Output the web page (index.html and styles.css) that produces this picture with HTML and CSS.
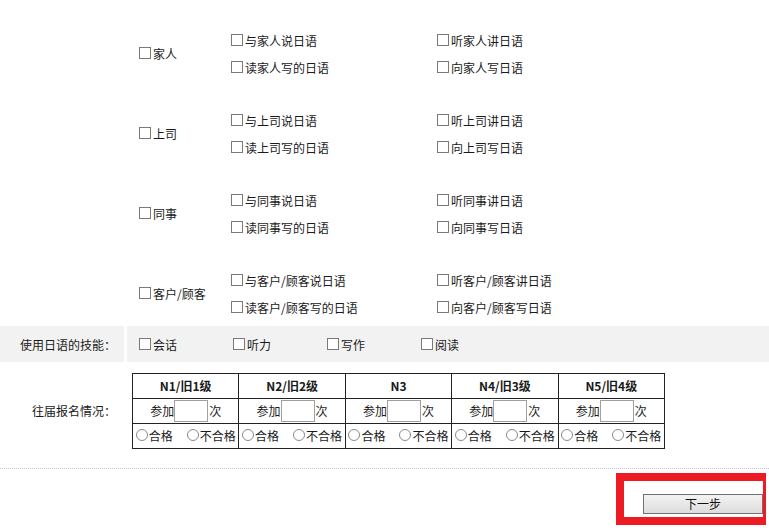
FILE: index.html
```html
<!DOCTYPE html>
<html lang="zh-CN">
<head>
<meta charset="utf-8">
<title>日语使用情况</title>
<link rel="stylesheet" href="styles.css">
</head>
<body>
<div class="form">
  <div class="scenes">
    <div class="row scene">
      <div class="label"></div>
      <div class="field scene-field">
        <div class="person"><span class="chk"><span class="box"></span>家人</span></div>
        <div class="subs">
          <span class="chk"><span class="box"></span>与家人说日语</span>
          <span class="chk"><span class="box"></span>听家人讲日语</span>
          <span class="chk"><span class="box"></span>读家人写的日语</span>
          <span class="chk"><span class="box"></span>向家人写日语</span>
        </div>
      </div>
    </div>
    <div class="row scene">
      <div class="label"></div>
      <div class="field scene-field">
        <div class="person"><span class="chk"><span class="box"></span>上司</span></div>
        <div class="subs">
          <span class="chk"><span class="box"></span>与上司说日语</span>
          <span class="chk"><span class="box"></span>听上司讲日语</span>
          <span class="chk"><span class="box"></span>读上司写的日语</span>
          <span class="chk"><span class="box"></span>向上司写日语</span>
        </div>
      </div>
    </div>
    <div class="row scene">
      <div class="label"></div>
      <div class="field scene-field">
        <div class="person"><span class="chk"><span class="box"></span>同事</span></div>
        <div class="subs">
          <span class="chk"><span class="box"></span>与同事说日语</span>
          <span class="chk"><span class="box"></span>听同事讲日语</span>
          <span class="chk"><span class="box"></span>读同事写的日语</span>
          <span class="chk"><span class="box"></span>向同事写日语</span>
        </div>
      </div>
    </div>
    <div class="row scene">
      <div class="label"></div>
      <div class="field scene-field">
        <div class="person"><span class="chk"><span class="box"></span>客户/顾客</span></div>
        <div class="subs">
          <span class="chk"><span class="box"></span>与客户/顾客说日语</span>
          <span class="chk"><span class="box"></span>听客户/顾客讲日语</span>
          <span class="chk"><span class="box"></span>读客户/顾客写的日语</span>
          <span class="chk"><span class="box"></span>向客户/顾客写日语</span>
        </div>
      </div>
    </div>
  </div>

  <div class="row skills">
    <div class="label gray">使用日语的技能：</div>
    <div class="field gray skills-field">
      <span class="chk skill"><span class="box"></span>会话</span>
      <span class="chk skill"><span class="box"></span>听力</span>
      <span class="chk skill"><span class="box"></span>写作</span>
      <span class="chk skill"><span class="box"></span>阅读</span>
    </div>
  </div>

  <div class="row exam">
    <div class="label">往届报名情况：</div>
    <div class="field exam-field">
      <table class="exam-table">
        <tr>
          <th>N1/旧1级</th><th>N2/旧2级</th><th>N3</th><th>N4/旧3级</th><th>N5/旧4级</th>
        </tr>
        <tr>
          <td><span class="times">参加<span class="input"></span>次</span></td>
          <td><span class="times">参加<span class="input"></span>次</span></td>
          <td><span class="times">参加<span class="input"></span>次</span></td>
          <td><span class="times">参加<span class="input"></span>次</span></td>
          <td><span class="times">参加<span class="input"></span>次</span></td>
        </tr>
        <tr>
          <td><span class="radios"><span class="rad"><span class="circle"></span>合格</span><span class="rad"><span class="circle"></span>不合格</span></span></td>
          <td><span class="radios"><span class="rad"><span class="circle"></span>合格</span><span class="rad"><span class="circle"></span>不合格</span></span></td>
          <td><span class="radios"><span class="rad"><span class="circle"></span>合格</span><span class="rad"><span class="circle"></span>不合格</span></span></td>
          <td><span class="radios"><span class="rad"><span class="circle"></span>合格</span><span class="rad"><span class="circle"></span>不合格</span></span></td>
          <td><span class="radios"><span class="rad"><span class="circle"></span>合格</span><span class="rad"><span class="circle"></span>不合格</span></span></td>
        </tr>
      </table>
    </div>
  </div>

  <div class="divider"></div>

  <div class="footer">
    <div class="highlight">
      <button class="next" type="button">下一步</button>
    </div>
  </div>
</div>
</body>
</html>
```

FILE: styles.css
```css
* { box-sizing: border-box; }

html, body {
  margin: 0;
  padding: 0;
  background: #fff;
}

body {
  font-family: "Noto Sans CJK SC", "Microsoft YaHei", sans-serif;
  font-size: 12px;
  color: #1a1a1a;
  line-height: 16px;
}

.form {
  width: 769px;
}

.scenes {
  padding-top: 27px;
  display: flex;
  flex-direction: column;
  gap: 26px;
}

.row {
  display: flex;
  gap: 3px;
}

.label {
  width: 124px;
  flex: none;
  text-align: right;
  padding-right: 8px;
  display: flex;
  align-items: center;
  justify-content: flex-end;
}

.label-text {
  letter-spacing: -0.5px;
}

.field {
  flex: 1;
  display: flex;
  align-items: center;
}

.gray { background: #f2f2f2; }

/* checkbox */
.chk {
  display: inline-flex;
  align-items: center;
  white-space: nowrap;
}

.box {
  width: 12px;
  height: 12px;
  border: 1px solid #7a7a7a;
  background: #fff;
  margin-right: 2px;
  margin-bottom: 2px;
  flex: none;
}

/* scene rows */
.scene { height: 54px; }

.person {
  width: 92px;
  padding-left: 12px;
  flex: none;
  display: flex;
  align-items: center;
}

.subs {
  display: grid;
  grid-template-columns: 206px 1fr;
  grid-auto-rows: 27px;
  flex: 1;
}

.subs .chk {
  padding-left: 12px;
}

/* skills */
.skills {
  margin-top: 5px;
  height: 36px;
}

.skills .label {
  padding-top: 2px;
}

.skills-field {
  padding-left: 12px;
  padding-top: 2px;
}

.skill {
  width: 94px;
}

/* exam */
.exam {
  margin-top: 11px;
}

.exam-field {
  padding-left: 5px;
}

.exam-table {
  border-collapse: collapse;
  table-layout: fixed;
  width: 533px;
}

.exam-table th,
.exam-table td {
  border: 1px solid #222;
  height: 25px;
  padding: 0;
  text-align: center;
  vertical-align: middle;
  white-space: nowrap;
}

.exam-table th {
  font-weight: bold;
}

.times {
  display: inline-flex;
  align-items: center;
}

.input {
  display: inline-block;
  width: 34px;
  height: 22px;
  border: 1px solid #a0a0a0;
  background: #fff;
  margin: 0 1px 0 0;
}

.radios {
  display: inline-flex;
  align-items: center;
  gap: 14px;
}

.rad {
  display: inline-flex;
  align-items: center;
}

.circle {
  width: 12px;
  height: 12px;
  border: 1px solid #8a8a8a;
  border-radius: 50%;
  margin-right: 1px;
  margin-bottom: 1px;
  background: #fff;
}

/* divider and footer */
.divider {
  margin-top: 19px;
  border-top: 1px dotted #c4c4c4;
}

.footer {
  display: flex;
  justify-content: flex-end;
  padding-right: 3px;
  margin-top: 4px;
}

.highlight {
  border-style: solid;
  border-color: #ed1c24;
  border-width: 8px 3px 8px 8px;
  padding: 13px 0 3px 19px;
  background: #fff;
}

.next {
  display: block;
  width: 120px;
  height: 20px;
  padding: 0;
  border: 1px solid #707070;
  background: linear-gradient(#f3f3f3, #dddddd);
  font-family: "Noto Sans CJK SC", "Microsoft YaHei", sans-serif;
  font-size: 12px;
  line-height: 18px;
  color: #111;
  border-radius: 0;
}
```
